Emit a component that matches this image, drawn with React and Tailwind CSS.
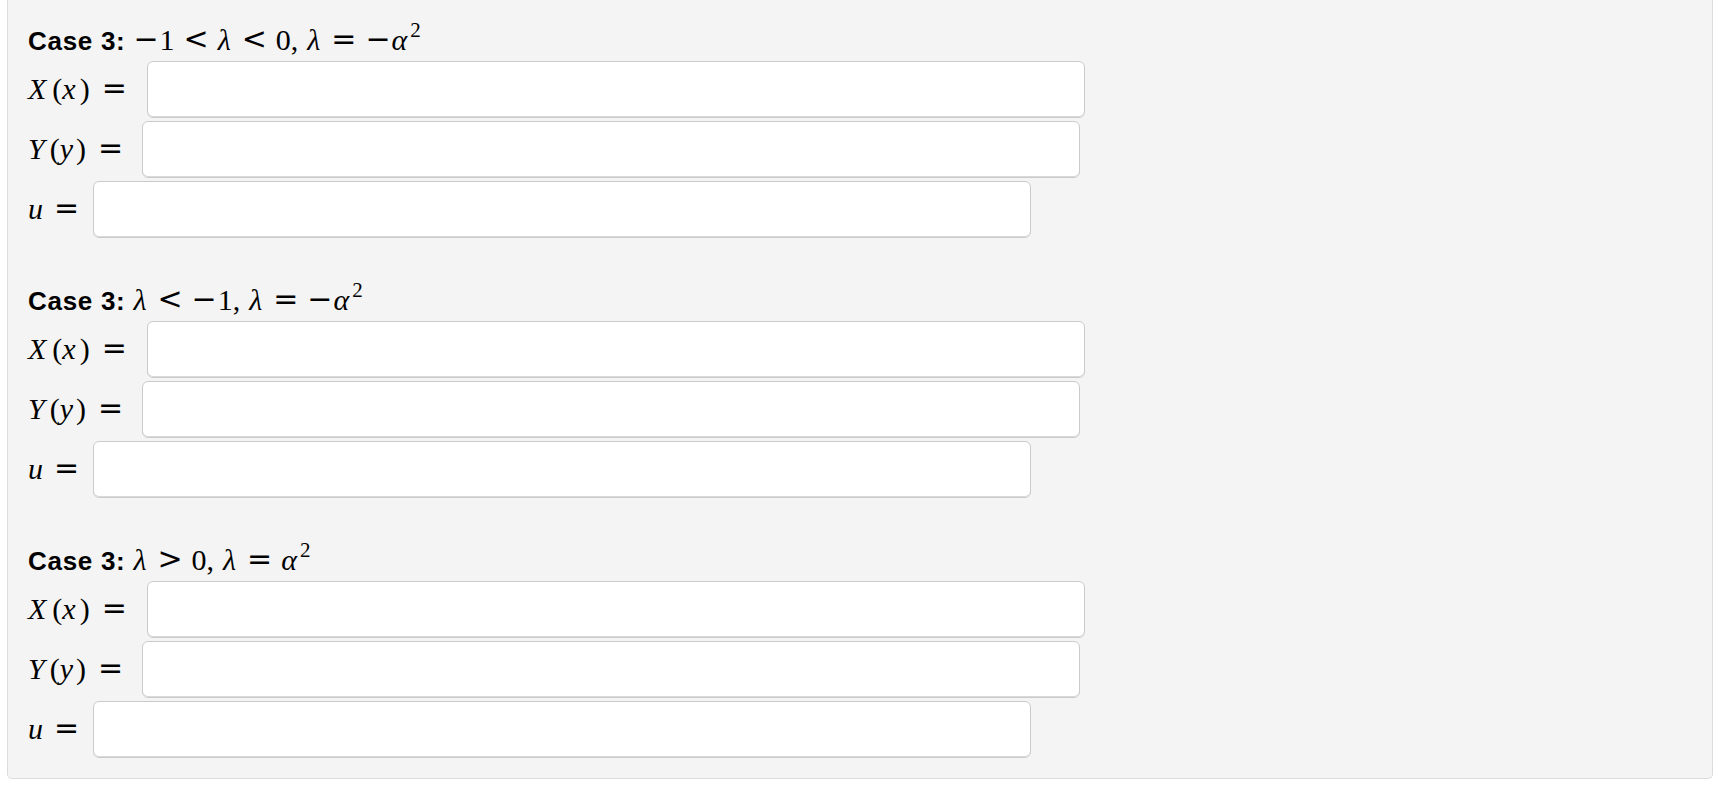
import React from "react";

const MATH = "font-['Liberation_Serif','Times_New_Roman',serif] text-[30px]";
const OP = "font-['DejaVu_Sans',sans-serif] text-[30px] not-italic leading-[0] align-[1px]";

function Rel({ children, className = "mx-[9px]" }) {
  return <span className={`${OP} ${className}`}>{children}</span>;
}

function Minus() {
  return <span className={`${OP} mr-[1px]`}>−</span>;
}

function I({ children, className = "" }) {
  return <i className={className}>{children}</i>;
}

function G({ children }) {
  return <i className="mr-[2px]">{children}</i>;
}

function Sq() {
  return <span className="text-[21px] leading-[0] align-[13px] ml-[1px] not-italic">2</span>;
}

function Heading({ children }) {
  return (
    <div className="h-[30px] leading-[30px] whitespace-nowrap text-black font-['Liberation_Sans',Arial,sans-serif] text-[26px]">
      <span className="font-bold tracking-[0.7px]">Case 3:</span>
      <span className={`${MATH} leading-[30px] ml-[8px]`}>{children}</span>
    </div>
  );
}

function Row({ label, w }) {
  return (
    <div className="flex items-center">
      <span className={`${MATH} leading-[27px] pb-[2px] text-black whitespace-nowrap shrink-0 ${w}`}>{label}</span>
      <div className="w-[938px] h-[57px] shrink-0 bg-white border border-[#cbcbcb] rounded-[6px] shadow-[inset_0_-1px_0_#d9d9d9]" />
    </div>
  );
}

function Rows() {
  return (
    <div className="flex flex-col gap-[3px] mt-[6px]">
      <Row
        w="w-[119px]"
        label={
          <>
            <I className="mr-[6px]">X</I>(<I className="mr-[4px]">x</I>)<Rel className="ml-[12px]">=</Rel>
          </>
        }
      />
      <Row
        w="w-[114px]"
        label={
          <>
            <I className="mr-[5px]">Y</I>(<I className="mr-[3px]">y</I>)<Rel className="ml-[12px]">=</Rel>
          </>
        }
      />
      <Row
        w="w-[65px]"
        label={
          <>
            <I className="mr-[1px]">u</I>
            <Rel className="ml-[10px]">=</Rel>
          </>
        }
      />
    </div>
  );
}

function Section({ heading }) {
  return (
    <section>
      <Heading>{heading}</Heading>
      <Rows />
    </section>
  );
}

export default function App() {
  return (
    <div className="bg-white w-[1714px] h-[786px] overflow-hidden">
      <div className="ml-[7px] mr-[1px] h-[779px] bg-[#f4f4f4] border-l border-r border-b border-[#dcdcdc] rounded-b-[5px] pl-[20px] pt-[25px] flex flex-col gap-[47px]">
        <Section
          heading={
            <>
              <Minus />1<Rel>&lt;</Rel>
              <G>λ</G>
              <Rel>&lt;</Rel>0,<span className="ml-[9px]" />
              <G>λ</G>
              <Rel>=</Rel>
              <Minus />
              <G>α</G>
              <Sq />
            </>
          }
        />
        <Section
          heading={
            <>
              <G>λ</G>
              <Rel>&lt;</Rel>
              <Minus />1,<span className="ml-[9px]" />
              <G>λ</G>
              <Rel>=</Rel>
              <Minus />
              <G>α</G>
              <Sq />
            </>
          }
        />
        <Section
          heading={
            <>
              <G>λ</G>
              <Rel>&gt;</Rel>0,<span className="ml-[9px]" />
              <G>λ</G>
              <Rel>=</Rel>
              <G>α</G>
              <Sq />
            </>
          }
        />
      </div>
    </div>
  );
}
